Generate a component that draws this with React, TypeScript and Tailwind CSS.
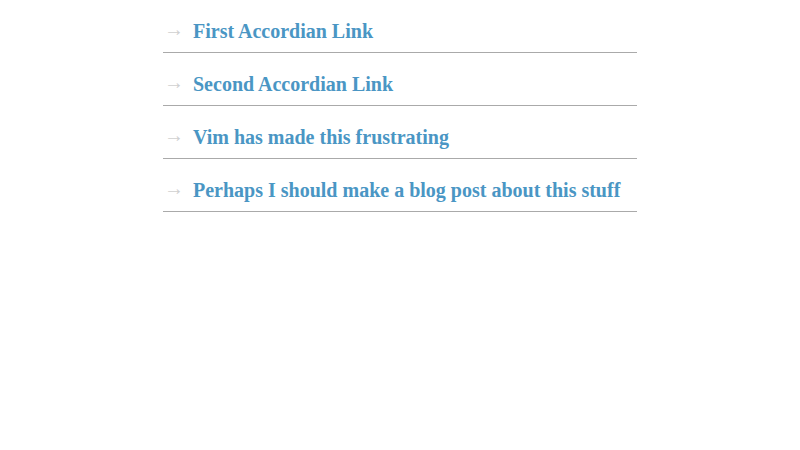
import React from "react";

const items = [
  "First Accordian Link",
  "Second Accordian Link",
  "Vim has made this frustrating",
  "Perhaps I should make a blog post about this stuff",
];

export default function App() {
  return (
    <div className="w-full min-h-[450px] bg-white" style={{ fontFamily: '"Liberation Serif", serif' }}>
      <ul className="mx-auto w-[474px]">
        {items.map((t) => (
          <li key={t} className="border-b border-[#aaaaaa]">
            <a href="#" className="flex items-center h-[52px] pt-[9px] whitespace-nowrap">
              <span className="w-[30px] pl-[1px] text-[20px] text-[#d0d0d0] -translate-y-[2px]">→</span>
              <span className="text-[20px] font-bold text-[#4a96c4]">{t}</span>
            </a>
          </li>
        ))}
      </ul>
    </div>
  );
}
